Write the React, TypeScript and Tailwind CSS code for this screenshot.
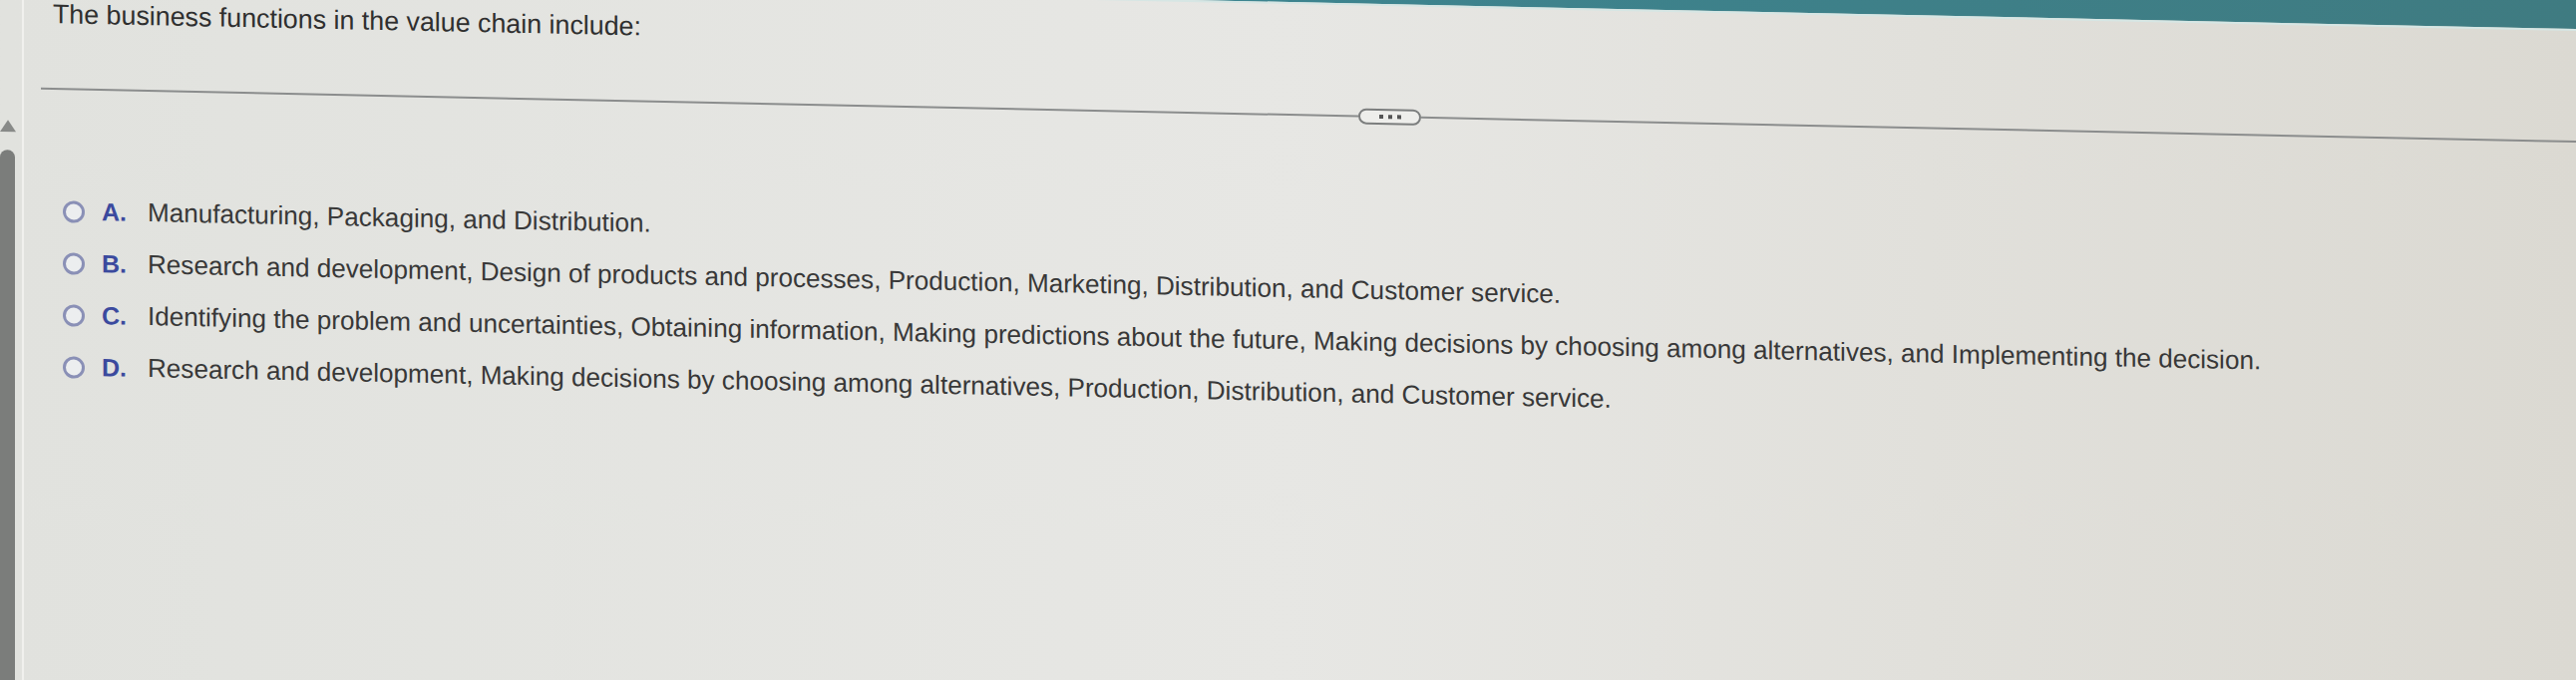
const options = [
  { letter: "A.", text: "Manufacturing, Packaging, and Distribution." },
  {
    letter: "B.",
    text: "Research and development, Design of products and processes, Production, Marketing, Distribution, and Customer service.",
  },
  {
    letter: "C.",
    text: "Identifying the problem and uncertainties, Obtaining information, Making predictions about the future, Making decisions by choosing among alternatives, and Implementing the decision.",
  },
  {
    letter: "D.",
    text: "Research and development, Making decisions by choosing among alternatives, Production, Distribution, and Customer service.",
  },
];

export default function App() {
  return (
    <div className="w-[2583px] h-[682px] overflow-hidden bg-gradient-to-r from-[#e1e2de] via-[#e7e7e4] to-[#dbd9d2] font-['Liberation_Sans',Arial,sans-serif]">
      {/* whole page sits a bit tilted, like the screen in the shot */}
      <div className="origin-top-left skew-y-[1.2deg] -mt-[63px]">
        {/* top bar */}
        <div className="h-[40px] bg-gradient-to-r from-[#3a8d9d] to-[#3f7b81] border-b-2 border-[#d6e6e4]" />

        <div className="flex">
          {/* left rail */}
          <aside className="w-[22px] shrink-0 flex flex-col pt-[143px]">
            <div className="w-0 h-0 border-l-[8px] border-r-[8px] border-b-[12px] border-l-transparent border-r-transparent border-b-[#888a88]" />
            <div className="mt-[18px] w-[15px] h-[700px] rounded-t-full bg-[#7b7d7b]" />
          </aside>

          {/* question panel */}
          <main className="flex-1 border-l-2 border-[#f1f1ee] pt-[20px]">
            <p className="pl-[29px] text-[26.8px] leading-[32px] text-[#2f2f2f]">
              The business functions in the value chain include:
            </p>

            {/* divider with handle */}
            <div className="mt-[51px] pl-[17px] flex items-center h-[16px]">
              <div className="w-[1321px] h-[2px] bg-[#8b8d8d]" />
              <button className="w-[63px] h-[16px] shrink-0 rounded-full border-2 border-[#7c7e7e] bg-[#eeeeeb] flex items-center justify-center gap-[5px]">
                <span className="w-[4px] h-[4px] bg-[#555]" />
                <span className="w-[4px] h-[4px] bg-[#555]" />
                <span className="w-[4px] h-[4px] bg-[#555]" />
              </button>
              <div className="flex-1 h-[2px] bg-[#8b8d8d]" />
            </div>

            {/* answer choices */}
            <div className="mt-[89px] pl-[39px] flex flex-col">
              {options.map((o) => (
                <label key={o.letter} className="flex items-center h-[52px] cursor-pointer">
                  <span className="w-[22px] h-[22px] shrink-0 rounded-full border-[3px] border-[#8a90b6] bg-[#eceeef]" />
                  <span className="ml-[17px] w-[46px] shrink-0 text-[25px] font-bold text-[#3b4a9e]">
                    {o.letter}
                  </span>
                  <span className="text-[26.1px] text-[#383838] whitespace-nowrap">{o.text}</span>
                </label>
              ))}
            </div>
          </main>
        </div>
      </div>
    </div>
  );
}
